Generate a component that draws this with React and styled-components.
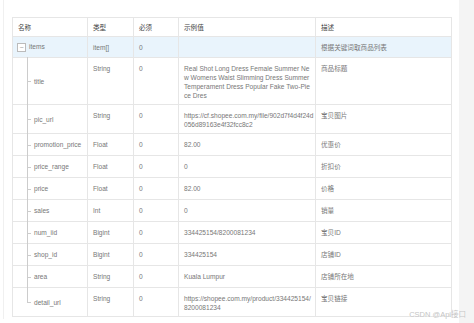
import React from 'react'
import styled, { createGlobalStyle, css } from 'styled-components'

const GlobalStyle = createGlobalStyle`
  html, body {
    margin: 0;
    padding: 0;
    background: #fff;
  }
  body {
    font-family: "Liberation Sans", Arial, "Noto Sans CJK SC", sans-serif;
  }
`

// example values are kept as the lines they wrap to in the doc
const fields = [
  {
    name: 'title',
    type: 'String',
    example: [
      'Real Shot Long Dress Female Summer Ne',
      'w Womens Waist Slimming Dress Summer',
      'Temperament Dress Popular Fake Two-Pie',
      'ce Dres',
    ],
    desc: '商品标题',
  },
  {
    name: 'pic_url',
    type: 'String',
    example: ['https://cf.shopee.com.my/file/902d7f4d4f24d', '056d89163e4f32fcc8c2'],
    desc: '宝贝图片',
  },
  { name: 'promotion_price', type: 'Float', example: ['82.00'], desc: '优惠价' },
  { name: 'price_range', type: 'Float', example: ['0'], desc: '折扣价' },
  { name: 'price', type: 'Float', example: ['82.00'], desc: '价格' },
  { name: 'sales', type: 'Int', example: ['0'], desc: '销量' },
  { name: 'num_iid', type: 'Bigint', example: ['334425154/8200081234'], desc: '宝贝ID' },
  { name: 'shop_id', type: 'Bigint', example: ['334425154'], desc: '店铺ID' },
  { name: 'area', type: 'String', example: ['Kuala Lumpur'], desc: '店铺所在地' },
  {
    name: 'detail_url',
    type: 'String',
    example: ['https://shopee.com.my/product/334425154/', '8200081234'],
    desc: '宝贝链接',
  },
]

const App = () => {
  return (
    <Page>
      <GlobalStyle />
      <Main>
        <Table>
          <colgroup>
            <col style={{ width: 75 }} />
            <col style={{ width: 46 }} />
            <col style={{ width: 45 }} />
            <col style={{ width: 137 }} />
            <col />
          </colgroup>
          <thead>
            <tr>
              <Th>名称</Th>
              <Th>类型</Th>
              <Th>必须</Th>
              <Th>示例值</Th>
              <Th>描述</Th>
            </tr>
          </thead>
          <tbody>
            <ParentRow>
              <NameCell>
                <Toggle>−</Toggle>
                items
              </NameCell>
              <Td>item[]</Td>
              <Td>0</Td>
              <Td></Td>
              <Td>根据关键词取商品列表</Td>
            </ParentRow>
            {fields.map((f, i) => (
              <tr key={f.name}>
                <ChildCell $last={i === fields.length - 1}>{f.name}</ChildCell>
                <Td>{f.type}</Td>
                <Td>0</Td>
                <Td>
                  {f.example.map((line) => (
                    <Line key={line}>{line}</Line>
                  ))}
                </Td>
                <Td>{f.desc}</Td>
              </tr>
            ))}
          </tbody>
        </Table>
      </Main>
      <Side />
      <Watermark>CSDN @Api接口</Watermark>
    </Page>
  )
}

export default App

const Page = styled.div`
  position: relative;
  display: flex;
  width: 474px;
  height: 323px;
  overflow: hidden;
`

const Main = styled.div`
  width: 456px;
  margin-left: 3px;
  border-left: 1px solid #f0f0f0;
  padding: 17px 0 0 8px;
  box-sizing: border-box;
  height: 319px;
`

const Side = styled.div`
  flex: 1;
  background: #f4f4f4;
`

const Table = styled.table`
  width: 440px;
  border-collapse: collapse;
  table-layout: fixed;
  font-size: 6.6px;
  color: #777;
`

const cellBase = css`
  border: 1px solid #e6e6e6;
  padding: 6px 5px 4px;
  line-height: 9px;
  text-align: left;
  vertical-align: top;
`

const Th = styled.th`
  ${cellBase};
  height: 18px;
  padding: 0 5px;
  vertical-align: middle;
  font-weight: normal;
  color: #444;
`

const Td = styled.td`
  ${cellBase};
  height: 22px;
  box-sizing: border-box;
`

const Line = styled.span`
  display: block;
  white-space: nowrap;
`

const ParentRow = styled.tr`
  background: #e9f4fc;
  td {
    height: 21px;
  }
`

const NameCell = styled(Td)`
  vertical-align: middle;
  padding: 0 0 0 4px;
  white-space: nowrap;
`

const Toggle = styled.span`
  display: inline-block;
  width: 7px;
  height: 7px;
  border: 1px solid #bbb;
  background: #fff;
  color: #999;
  font-size: 7px;
  line-height: 7px;
  text-align: center;
  vertical-align: middle;
  margin-right: 3px;
`

const ChildCell = styled(Td)`
  position: relative;
  vertical-align: middle;
  padding: 0 0 0 21px;
  white-space: nowrap;
  &::before {
    content: '';
    position: absolute;
    left: 14px;
    top: -1px;
    bottom: ${(p) => (p.$last ? '50%' : '-1px')};
    border-left: 1px solid #ccc;
  }
  &::after {
    content: '';
    position: absolute;
    left: 14px;
    top: 50%;
    width: 4px;
    border-top: 1px solid #ccc;
  }
`

const Watermark = styled.div`
  position: absolute;
  right: 8px;
  bottom: 4px;
  font-size: 7.5px;
  color: #c4c4c4;
  text-shadow: 0 0 1px #fff;
`
